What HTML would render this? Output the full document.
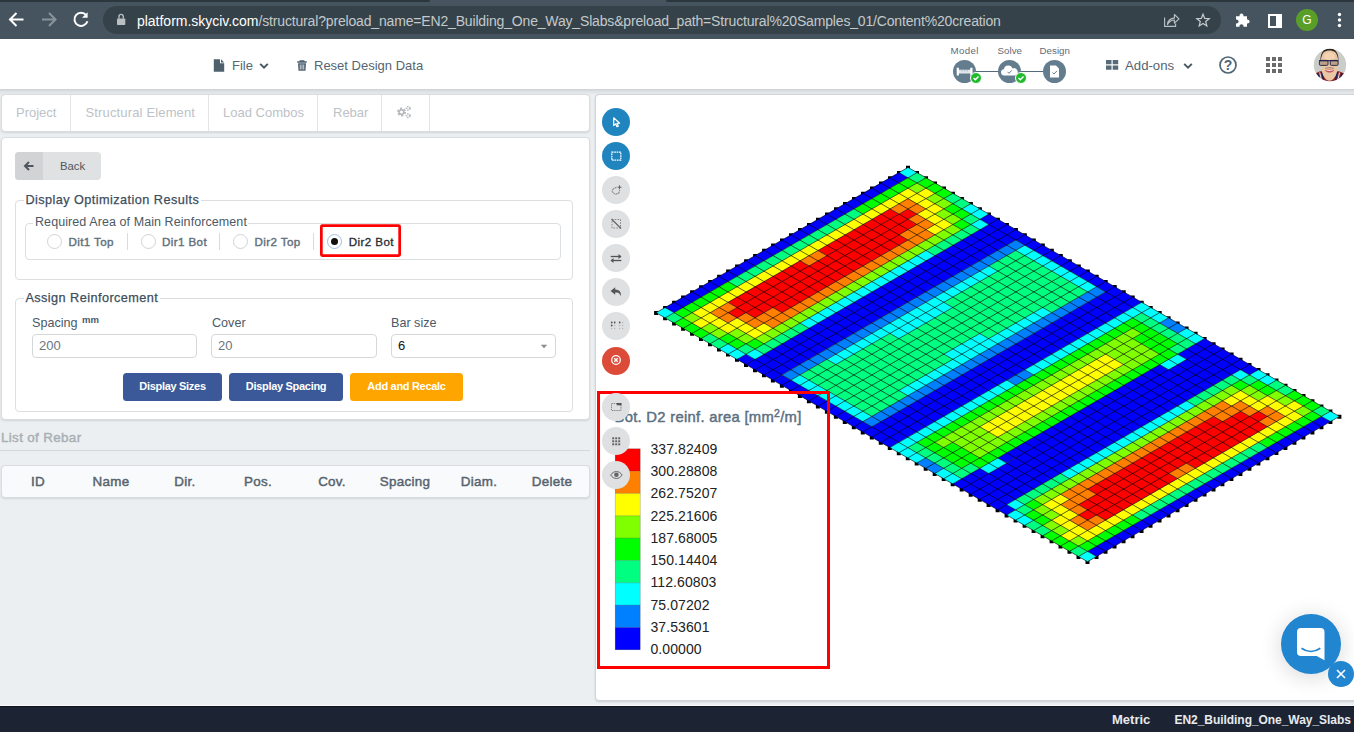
<!DOCTYPE html>
<html lang="en">
<head>
<meta charset="utf-8">
<title>SkyCiv Structural 3D</title>
<style>
*{box-sizing:border-box;margin:0;padding:0}
html,body{width:1354px;height:732px;overflow:hidden;background:#eceff1;font-family:"Liberation Sans",sans-serif;color:#3f4d5a}
.abs{position:absolute}
#chrome{left:0;top:0;width:1354px;height:38.500px;background:#45545e}
#chrome .topstrip{top:0;height:1.600px;background:#2b363d}
#urlpill{left:103px;top:6px;width:1118px;height:28px;border-radius:14px;background:#364249}
#url{left:137px;top:11.700px;font-size:14px;line-height:18px;color:#c3c9cc;white-space:nowrap;letter-spacing:-0.165px}
#url b{font-weight:normal;color:#fff;letter-spacing:-0.020px}
#appbar{left:0;top:38.500px;width:1354px;height:50.500px;background:#fff}
#hshadow{left:0;top:89px;width:1354px;height:6px;background:linear-gradient(#ccd0d4,#dde0e3 35%,#eceff1)}
.menu{font-size:13px;color:#556571;white-space:nowrap;line-height:18px}
#left{left:0;top:92px;width:592px;height:614px;background:#eceff1}
.card{background:#fff;border:1px solid #d9dde0;border-radius:4px;box-shadow:0 1px 2px rgba(34,36,38,.12)}
.tab{font-size:13px;color:#bdc2c6;line-height:16px;white-space:nowrap}
.vsep{width:1px;background:#e2e5e7}
.fs{border:1px solid #dcdfe2;border-radius:4px}
.lg{background:#fff;white-space:nowrap;line-height:16px}
.radio{width:15px;height:15px;border-radius:50%;border:1px solid #cfd3d6;background:#fff}
.rl{font-size:11.600px;color:#62707c;-webkit-text-stroke:0.400px currentColor;white-space:nowrap;line-height:14px;letter-spacing:.400px}
.lab{font-size:12.600px;color:#4b5966;white-space:nowrap;line-height:16px}
.inp{height:24px;border:1px solid #d4d8db;border-radius:4px;background:#fff;font-size:13px;color:#69757f;line-height:22px;padding-left:6px}
.btn{height:28px;border-radius:3.500px;color:#fff;font-size:11px;font-weight:bold;text-align:center;line-height:27px;white-space:nowrap;letter-spacing:-0.300px}
.th{font-size:13.400px;color:#56636e;-webkit-text-stroke:0.450px #56636e;letter-spacing:0.300px;white-space:nowrap;line-height:18px;text-align:center;width:80px}
#canvas{left:594.750px;top:94px;width:765px;height:606.800px;background:#fff;border:1px solid #d0d4d8;border-radius:4px;box-shadow:0 1px 2px rgba(34,36,38,.15)}
.tb{width:28px;height:28px;border-radius:50%;background:#dfe0e2}
.tb.on{background:#2085bf}
.tb.red{background:#dc4a38}
#bottom{left:0;top:706px;width:1354px;height:26px;background:#1c2433;border-top:1px solid #10151f;box-shadow:0 -1px 0 #f8f9fa}
.bt{font-size:13px;font-weight:bold;color:#e8eaed;white-space:nowrap;line-height:16px}
.lv{font-size:14px;color:#222;white-space:nowrap;line-height:16px;left:650.500px;letter-spacing:0.080px}
</style>
</head>
<body>
<!-- ===== browser chrome ===== -->
<div id="chrome" class="abs">
  <div class="abs topstrip" style="left:0;width:430px;border-radius:0 0 5px 0"></div><div class="abs topstrip" style="left:666px;width:688px;border-radius:0 0 0 5px"></div>
  <svg class="abs" style="left:0;top:0" width="100" height="38" viewBox="0 0 100 38" fill="none" stroke-linecap="butt" stroke-linejoin="miter">
    <path d="M23.5 19.5H10.5M16.5 13L10 19.5L16.5 26" stroke="#fff" stroke-width="2"/>
    <path d="M42 19.5H55M49 13L55.5 19.5L49 26" stroke="#87949b" stroke-width="2"/>
    <path d="M86.2 15.2A6.6 6.6 0 1 0 87.4 21.2" stroke="#fff" stroke-width="2"/>
    <path d="M87.6 12.2V17.8H82Z" fill="#fff" stroke="none"/>
  </svg>
  <div id="urlpill" class="abs"></div>
  <svg class="abs" style="left:114px;top:11px" width="14" height="16" viewBox="0 0 14 16"><rect x="3" y="7.400" width="8.300" height="6.700" rx="0.800" fill="#b9bfc3"/><path d="M5 7.600V5.500a2.150 2.150 0 0 1 4.300 0V7.600" fill="none" stroke="#b9bfc3" stroke-width="1.400"/></svg>
  <div id="url" class="abs"><b>platform.skyciv.com</b>/structural?preload_name=EN2_Building_One_Way_Slabs&amp;preload_path=Structural%20Samples_01/Content%20creation</div>
  <svg class="abs" style="left:1160px;top:8px" width="194" height="26" viewBox="0 0 194 26" fill="none">
    <!-- share -->
    <path d="M4.600 9.500V18.300H15.600V15.500" stroke="#b9c0c4" stroke-width="1.150"/>
    <path d="M7.500 16.600c0.300-4.300 2.900-6.300 6.900-6.500V6.500l4.600 4.300-4.600 4.300v-3.100c-3.300 0.100-5.300 1.400-6.900 4.600z" stroke="#b9c0c4" stroke-width="1.150" stroke-linejoin="round"/>
    <!-- star -->
    <path d="M43.00 6.20L44.68 10.39L49.18 10.69L45.71 13.58L46.82 17.96L43.00 15.55L39.18 17.96L40.29 13.58L36.82 10.69L41.32 10.39Z" stroke="#c5cbce" stroke-width="1.250" stroke-linejoin="miter"/>
    <!-- puzzle -->
    <path d="M76 8.200H79.600a2 2 0 1 1 3.800 0H87V11.600a2 2 0 1 1 0 3.800V18.800H83.400a2 2 0 1 0-3.800 0H76V15.400a2 2 0 1 0 0-3.800Z" fill="#fff"/>
    <!-- sidepanel -->
    <rect x="109" y="7" width="12" height="12" stroke="#fff" stroke-width="2"/><rect x="116" y="7" width="5" height="12" fill="#fff"/>
    <!-- avatar -->
    <circle cx="147" cy="12" r="11" fill="#5a9e2a"/>
    <!-- dots -->
    <circle cx="179.500" cy="6.500" r="1.700" fill="#fff"/><circle cx="179.500" cy="12" r="1.700" fill="#fff"/><circle cx="179.500" cy="17.500" r="1.700" fill="#fff"/>
  </svg>
  <div class="abs" style="left:1301px;top:12px;width:12px;text-align:center;font-size:12px;line-height:16px;color:#fff">G</div>
</div>

<!-- ===== app bar ===== -->
<div id="appbar" class="abs"></div>
<svg class="abs" style="left:212px;top:58px" width="14" height="16" viewBox="0 0 14 16"><path d="M1.800 1.300h6.200v4h4.200V13.700H1.800z M9 1.300l3.200 3.200H9z" fill="#50616e"/></svg>
<div class="abs menu" style="left:232px;top:57px">File</div>
<svg class="abs" style="left:258px;top:62px" width="12" height="9" viewBox="0 0 12 9"><path d="M2.200 1.800l3.800 3.800 3.800-3.800" fill="none" stroke="#465560" stroke-width="1.900"/></svg>
<svg class="abs" style="left:295.500px;top:59px" width="12" height="14" viewBox="0 0 12 14"><path d="M1.200 3h9.600M4.200 3V1.800h3.600V3" stroke="#50616e" stroke-width="1.300" fill="none"/><path d="M2 4.300h8l-0.500 7.500H2.500z" fill="#50616e"/><path d="M4.300 5.500v5M6 5.500v5M7.700 5.500v5" stroke="#fff" stroke-width="0.700"/></svg>
<div class="abs menu" style="left:314px;top:57px">Reset Design Data</div>

<!-- workflow steps -->
<div class="abs" style="left:950.5px;top:45px;font-size:9.700px;color:#5f6c77;line-height:12px;letter-spacing:0.350px">Model</div>
<div class="abs" style="left:997.5px;top:45px;font-size:9.700px;color:#5f6c77;line-height:12px;letter-spacing:0.050px">Solve</div>
<div class="abs" style="left:1039.5px;top:45px;font-size:9.700px;color:#5f6c77;line-height:12px;letter-spacing:0.050px">Design</div>
<svg class="abs" style="left:945px;top:56px" width="130" height="30" viewBox="0 0 130 30">
  <path d="M20 15.500H109" stroke="#55697a" stroke-width="1.200"/>
  <circle cx="19.500" cy="15.500" r="11.500" fill="#637c8e"/>
  <circle cx="64.500" cy="15.500" r="11.500" fill="#637c8e"/>
  <circle cx="109.500" cy="15.500" r="11.500" fill="#637c8e"/>
  <path d="M12.800 11.700v7.800M26.400 11.700v7.800" stroke="#fff" stroke-width="2.200"/><path d="M12.800 15.600h13.600" stroke="#fff" stroke-opacity=".82" stroke-width="3.800"/>
  <path d="M16.300 14.800h6.600" stroke="#637c8e" stroke-opacity=".55" stroke-width="0.800" stroke-dasharray="1.400 1.200"/>
  <path d="M58.500 19.500a3.200 3.200 0 0 1 0.300-6.300 4.600 4.600 0 0 1 8.800-0.700 3.600 3.600 0 0 1 2.700 7z" fill="#fff"/>
  <path d="M62.500 15.800l1.500 1.500 2.800-3" stroke="#637c8e" stroke-width="1" fill="none"/>
  <path d="M105 9.500h6l3 3v9h-9z" fill="#fff"/>
  <path d="M107.500 16.500l1.500 1.500 2.800-3" stroke="#637c8e" stroke-width="1" fill="none"/>
  <circle cx="31" cy="22" r="5.500" fill="#21ba2d" stroke="#fff" stroke-width="1"/>
  <path d="M28.500 22l1.800 1.800 3.200-3.400" stroke="#fff" stroke-width="1.400" fill="none"/>
  <circle cx="76" cy="22" r="5.500" fill="#21ba2d" stroke="#fff" stroke-width="1"/>
  <path d="M73.500 22l1.800 1.800 3.200-3.400" stroke="#fff" stroke-width="1.400" fill="none"/>
</svg>
<svg class="abs" style="left:1106px;top:60px" width="13" height="11" viewBox="0 0 13 11"><path d="M0 0h5.500v4.300h-5.500zM6.700 0h5.500v4.300h-5.500zM0 5.500h5.500v4.300h-5.500zM6.700 5.500h5.500v4.300h-5.500z" fill="#566a78"/></svg>
<div class="abs menu" style="left:1125px;top:57px;font-size:13.200px">Add-ons</div>
<svg class="abs" style="left:1181.500px;top:62px" width="12" height="9" viewBox="0 0 12 9"><path d="M2.200 1.800l3.800 3.800 3.800-3.800" fill="none" stroke="#465560" stroke-width="1.900"/></svg>
<svg class="abs" style="left:1218px;top:55px" width="20" height="20" viewBox="0 0 20 20"><circle cx="10" cy="10" r="8" fill="none" stroke="#4f6675" stroke-width="1.700"/></svg>
<div class="abs" style="left:1218px;top:56px;width:20px;text-align:center;font-size:14px;font-weight:bold;color:#4f6675;line-height:18px">?</div>
<svg class="abs" style="left:1265px;top:56px" width="18" height="18" viewBox="0 0 18 18" fill="#6b6b6b"><rect x="1" y="1" width="4" height="4"/><rect x="7" y="1" width="4" height="4"/><rect x="13" y="1" width="4" height="4"/><rect x="1" y="7" width="4" height="4"/><rect x="7" y="7" width="4" height="4"/><rect x="13" y="7" width="4" height="4"/><rect x="1" y="13" width="4" height="4"/><rect x="7" y="13" width="4" height="4"/><rect x="13" y="13" width="4" height="4"/></svg>
<svg class="abs" style="left:1313px;top:48px" width="34" height="34" viewBox="0 0 34 34">
  <defs><clipPath id="av"><circle cx="17" cy="17" r="16.200"/></clipPath><filter id="bl" x="-10%" y="-10%" width="120%" height="120%"><feGaussianBlur stdDeviation="0.700"/></filter></defs>
  <g clip-path="url(#av)"><g filter="url(#bl)">
    <rect x="-2" y="-2" width="38" height="38" fill="#cbcdc9"/>
    <path d="M-1 36V27l8-3.800h19l9 3.800v9z" fill="#8a2a32"/>
    <path d="M4.500 25l2.500 9M8.800 24l2 10M24.200 24l-2 10M29 25l-2.500 9" stroke="#1c2250" stroke-width="1.400" fill="none"/>
    <path d="M6.700 24.500l2.200 9M26.600 24.500l-2.200 9" stroke="#ece8e8" stroke-width="1" fill="none"/>
    <path d="M7.600 13c-0.300-7.500 3.200-12.300 8.900-12.300s9.200 4.800 8.900 12.300c-0.100 3.500-0.500 7-1.300 10.500-1.100 4.700-3.900 9.200-7.600 9.200s-6.500-4.500-7.600-9.200c-0.800-3.500-1.200-7-1.300-10.500z" fill="#ebc6a4"/>
    <ellipse cx="16.500" cy="9" rx="5.500" ry="4.500" fill="#f3d3b2"/>
    <path d="M7.700 14.500c-1.200-9.300 3.100-14.300 8.800-14.300s10 5 8.800 14.300c-0.200-4.800-1.200-8.400-3-10.200-1.500-1.400-3.800-1.900-5.800-1.900s-4.300 0.500-5.800 1.900c-1.800 1.800-2.800 5.400-3 10.200z" fill="#2c2520"/>
    <path d="M12 20.600c2.500-1.100 6.500-1.100 9 0" stroke="#94705c" stroke-width="1.100" fill="none" opacity=".65"/>
    <path d="M11.800 22.200c2.200 3.200 7.200 3.200 9.400 0-3-0.800-6.400-0.800-9.400 0z" fill="#c4545e"/>
    <path d="M12.600 22.300c2.500-0.500 5.300-0.500 7.800 0-2.300 1-5.500 1-7.800 0z" fill="#f0dfda"/>
    <rect x="6.400" y="12.400" width="8.600" height="5" rx="1.200" fill="#8a7058" fill-opacity=".45" stroke="#1b1f4a" stroke-width="0.900"/>
    <rect x="17.300" y="12.400" width="7.800" height="5" rx="1.200" fill="#8a7058" fill-opacity=".45" stroke="#1b1f4a" stroke-width="0.900"/>
    <path d="M6 12.700h19.300" stroke="#1b1f4a" stroke-width="1.200"/>
  </g></g>
</svg>

<!-- ===== left panel ===== -->
<div id="left" class="abs"></div>
<div id="hshadow" class="abs"></div>
<div class="abs card" style="left:1px;top:94px;width:589px;height:38px"></div>
<div class="abs tab" style="left:16px;top:105px">Project</div>
<div class="abs vsep" style="left:70px;top:95px;height:36px"></div>
<div class="abs tab" style="left:85.500px;top:105px;letter-spacing:0.150px">Structural Element</div>
<div class="abs vsep" style="left:208px;top:95px;height:36px"></div>
<div class="abs tab" style="left:223px;top:105px">Load Combos</div>
<div class="abs vsep" style="left:317px;top:95px;height:36px"></div>
<div class="abs tab" style="left:333px;top:105px">Rebar</div>
<div class="abs vsep" style="left:381px;top:95px;height:36px"></div>
<svg class="abs" style="left:396px;top:105px" width="16" height="14" viewBox="0 0 16 14"><circle cx="5.500" cy="7" r="3.200" fill="none" stroke="#b4b9bd" stroke-width="2.600" stroke-dasharray="1.900 1.450"/><circle cx="5.500" cy="7" r="2.300" fill="none" stroke="#b4b9bd" stroke-width="1.600"/><circle cx="12.200" cy="3.300" r="1.700" fill="none" stroke="#b4b9bd" stroke-width="1.800" stroke-dasharray="1.200 0.900"/><circle cx="12.200" cy="10.700" r="1.700" fill="none" stroke="#b4b9bd" stroke-width="1.800" stroke-dasharray="1.200 0.900"/></svg>
<div class="abs vsep" style="left:429px;top:95px;height:36px"></div>

<div class="abs card" style="left:1px;top:137px;width:589px;height:283px"></div>
<!-- back button -->
<div class="abs" style="left:15px;top:152px;width:86px;height:28px;border-radius:4px;background:#e0e1e2"></div>
<div class="abs" style="left:15px;top:152px;width:28px;height:28px;border-radius:4px 0 0 4px;background:#d2d3d4"></div>
<svg class="abs" style="left:23px;top:160px" width="12" height="12" viewBox="0 0 12 12"><path d="M10.500 6H2.500M6 2L2 6l4 4" fill="none" stroke="#4e5660" stroke-width="2"/></svg>
<div class="abs" style="left:60px;top:158px;font-size:11.300px;color:#4e5660;line-height:16px">Back</div>

<!-- fieldset 1 -->
<div class="abs fs" style="left:15px;top:199.500px;width:558px;height:80.500px"></div>
<div class="abs lg" style="left:24px;top:192px;padding:0 2px 0 1.400px;font-size:12.700px;letter-spacing:0.440px;color:#3d4d5c;-webkit-text-stroke:0.250px #3d4d5c">Display Optimization Results</div>
<div class="abs fs" style="left:25px;top:222.500px;width:536px;height:37.500px"></div>
<div class="abs lg" style="left:33px;top:214px;padding:0 1px 0 2px;font-size:12.500px;letter-spacing:0.080px;color:#4b5966">Required Area of Main Reinforcement</div>
<div class="abs radio" style="left:47px;top:234px"></div>
<div class="abs rl" style="left:68.400px;top:235px">Dit1 Top</div>
<div class="abs vsep" style="left:127px;top:233px;height:17px;background:#d9dcdf"></div>
<div class="abs radio" style="left:141px;top:234px"></div>
<div class="abs rl" style="left:162px;top:235px">Dir1 Bot</div>
<div class="abs vsep" style="left:219px;top:233px;height:17px;background:#d9dcdf"></div>
<div class="abs radio" style="left:233px;top:234px"></div>
<div class="abs rl" style="left:254.500px;top:235px">Dir2 Top</div>
<div class="abs vsep" style="left:313px;top:233px;height:17px;background:#d9dcdf"></div>
<div class="abs radio" style="left:327px;top:234px;border-color:#9fc3dc"></div>
<div class="abs" style="left:330.700px;top:237.700px;width:7.600px;height:7.600px;border-radius:50%;background:#111"></div>
<div class="abs rl" style="left:348.800px;top:235px;color:#262b30;-webkit-text-stroke-width:0.300px">Dir2 Bot</div>
<svg class="abs" style="left:318px;top:222px" width="86" height="38" viewBox="0 0 86 38"><rect x="3.350" y="3.650" width="78.300" height="29.900" rx="1" fill="none" stroke="#ff0000" stroke-width="2.700"/></svg>

<!-- fieldset 2 -->
<div class="abs fs" style="left:15px;top:297.500px;width:558px;height:114px"></div>
<div class="abs lg" style="left:24px;top:290px;padding:0 2px 0 1.400px;font-size:12.700px;letter-spacing:0.440px;color:#3d4d5c;-webkit-text-stroke:0.250px #3d4d5c">Assign Reinforcement</div>
<div class="abs lab" style="left:32px;top:315px">Spacing <span style="font-size:9.500px;font-weight:bold;position:relative;top:-4px;left:1px">mm</span></div>
<div class="abs lab" style="left:212px;top:315px">Cover</div>
<div class="abs lab" style="left:391px;top:315px">Bar size</div>
<div class="abs inp" style="left:32px;top:334px;width:165px">200</div>
<div class="abs inp" style="left:211px;top:334px;width:166px">20</div>
<div class="abs inp" style="left:391px;top:334px;width:165px;color:#111">6</div>
<svg class="abs" style="left:540px;top:344px" width="8" height="5" viewBox="0 0 8 5"><path d="M0.800 0.800h6.400L4 4.200z" fill="#8a8a8a"/></svg>
<div class="abs btn" style="left:123px;top:373px;width:99px;background:#3b5998">Display Sizes</div>
<div class="abs btn" style="left:229px;top:373px;width:114px;background:#3b5998">Display Spacing</div>
<div class="abs btn" style="left:350px;top:373px;width:113px;background:#ffa500">Add and Recalc</div>

<div class="abs" style="left:1px;top:428.500px;font-size:13.400px;color:#a9afb4;-webkit-text-stroke:0.450px #a9afb4;letter-spacing:0.350px;line-height:18px;white-space:nowrap">List of Rebar</div>
<div class="abs" style="left:0;top:450px;width:590px;height:1px;background:#d4d8db"></div>
<div class="abs card" style="left:1px;top:465px;width:589px;height:33px;background:#f9fafb"></div>
<div class="abs th" style="left:-2px;top:473px">ID</div>
<div class="abs th" style="left:71px;top:473px">Name</div>
<div class="abs th" style="left:145px;top:473px">Dir.</div>
<div class="abs th" style="left:218px;top:473px">Pos.</div>
<div class="abs th" style="left:292px;top:473px">Cov.</div>
<div class="abs th" style="left:365px;top:473px">Spacing</div>
<div class="abs th" style="left:439px;top:473px">Diam.</div>
<div class="abs th" style="left:512px;top:473px">Delete</div>

<!-- ===== canvas ===== -->
<div id="canvas" class="abs"></div>
<svg class="abs" style="left:640px;top:150px" width="714" height="430" viewBox="0 0 714 430">
<path fill="#000" d="M266 15.8h4v4h-4zM14.1 161.1h4v4h-4zM275 21h4v4h-4zM23.1 166.3h4v4h-4zM284 26.2h4v4h-4zM32.1 171.5h4v4h-4zM293 31.4h4v4h-4zM41.1 176.7h4v4h-4zM302 36.6h4v4h-4zM50.1 181.8h4v4h-4zM310.9 41.7h4v4h-4zM59 187h4v4h-4zM319.9 46.9h4v4h-4zM68 192.2h4v4h-4zM328.9 52.1h4v4h-4zM77 197.4h4v4h-4zM337.9 57.3h4v4h-4zM86 202.6h4v4h-4zM346.9 62.5h4v4h-4zM95 207.8h4v4h-4zM355.9 67.7h4v4h-4zM104 213h4v4h-4zM364.9 72.9h4v4h-4zM113 218.2h4v4h-4zM373.9 78h4v4h-4zM122 223.3h4v4h-4zM382.8 83.2h4v4h-4zM130.9 228.5h4v4h-4zM391.8 88.4h4v4h-4zM139.9 233.7h4v4h-4zM400.8 93.6h4v4h-4zM148.9 238.9h4v4h-4zM409.8 98.8h4v4h-4zM157.9 244.1h4v4h-4zM418.8 104h4v4h-4zM166.9 249.3h4v4h-4zM427.8 109.2h4v4h-4zM175.9 254.5h4v4h-4zM436.8 114.4h4v4h-4zM184.9 259.7h4v4h-4zM445.8 119.5h4v4h-4zM193.9 264.8h4v4h-4zM454.7 124.7h4v4h-4zM202.8 270h4v4h-4zM463.7 129.9h4v4h-4zM211.8 275.2h4v4h-4zM472.7 135.1h4v4h-4zM220.8 280.4h4v4h-4zM481.7 140.3h4v4h-4zM229.8 285.6h4v4h-4zM490.7 145.5h4v4h-4zM238.8 290.8h4v4h-4zM499.7 150.7h4v4h-4zM247.8 296h4v4h-4zM508.7 155.9h4v4h-4zM256.8 301.2h4v4h-4zM517.7 161h4v4h-4zM265.8 306.3h4v4h-4zM526.6 166.2h4v4h-4zM274.7 311.5h4v4h-4zM535.6 171.4h4v4h-4zM283.7 316.7h4v4h-4zM544.6 176.6h4v4h-4zM292.7 321.9h4v4h-4zM553.6 181.8h4v4h-4zM301.7 327.1h4v4h-4zM562.6 187h4v4h-4zM310.7 332.3h4v4h-4zM571.6 192.2h4v4h-4zM319.7 337.5h4v4h-4zM580.6 197.4h4v4h-4zM328.7 342.7h4v4h-4zM589.6 202.5h4v4h-4zM337.7 347.8h4v4h-4zM598.5 207.7h4v4h-4zM346.6 353h4v4h-4zM607.5 212.9h4v4h-4zM355.6 358.2h4v4h-4zM616.5 218.1h4v4h-4zM364.6 363.4h4v4h-4zM625.5 223.3h4v4h-4zM373.6 368.6h4v4h-4zM634.5 228.5h4v4h-4zM382.6 373.8h4v4h-4zM643.5 233.7h4v4h-4zM391.6 379h4v4h-4zM652.5 238.9h4v4h-4zM400.6 384.2h4v4h-4zM661.5 244h4v4h-4zM409.6 389.3h4v4h-4zM670.4 249.2h4v4h-4zM418.5 394.5h4v4h-4zM679.4 254.4h4v4h-4zM427.5 399.7h4v4h-4zM688.4 259.6h4v4h-4zM436.5 404.9h4v4h-4zM697.4 264.8h4v4h-4zM445.5 410.1h4v4h-4zM257 21h4v4h-4zM688.4 270h4v4h-4zM248 26.2h4v4h-4zM679.4 275.2h4v4h-4zM239 31.4h4v4h-4zM670.4 280.4h4v4h-4zM230 36.6h4v4h-4zM661.4 285.6h4v4h-4zM221 41.7h4v4h-4zM652.4 290.7h4v4h-4zM212 46.9h4v4h-4zM643.4 295.9h4v4h-4zM203 52.1h4v4h-4zM634.4 301.1h4v4h-4zM194 57.3h4v4h-4zM625.4 306.3h4v4h-4zM185 62.5h4v4h-4zM616.4 311.5h4v4h-4zM176 67.7h4v4h-4zM607.4 316.7h4v4h-4zM167 72.9h4v4h-4zM598.4 321.9h4v4h-4zM158 78.1h4v4h-4zM589.4 327.1h4v4h-4zM149 83.3h4v4h-4zM580.4 332.3h4v4h-4zM140 88.5h4v4h-4zM571.5 337.4h4v4h-4zM131.1 93.6h4v4h-4zM562.5 342.6h4v4h-4zM122.1 98.8h4v4h-4zM553.5 347.8h4v4h-4zM113.1 104h4v4h-4zM544.5 353h4v4h-4zM104.1 109.2h4v4h-4zM535.5 358.2h4v4h-4zM95.1 114.4h4v4h-4zM526.5 363.4h4v4h-4zM86.1 119.6h4v4h-4zM517.5 368.6h4v4h-4zM77.1 124.8h4v4h-4zM508.5 373.8h4v4h-4zM68.1 130h4v4h-4zM499.5 379h4v4h-4zM59.1 135.2h4v4h-4zM490.5 384.2h4v4h-4zM50.1 140.3h4v4h-4zM481.5 389.3h4v4h-4zM41.1 145.5h4v4h-4zM472.5 394.5h4v4h-4zM32.1 150.7h4v4h-4zM463.5 399.7h4v4h-4zM23.1 155.9h4v4h-4zM454.5 404.9h4v4h-4z"/>
<path fill="#0000ff" d="M259 22.6L268 27.8L34.1 162.7L25.1 157.5ZM348.9 64.1L357.9 69.3L348.9 74.5L339.9 69.3ZM106 204.2L115 209.4L106 214.6L97 209.4ZM357.9 69.3L366.9 74.5L115 219.8L106 214.6ZM366.9 74.5L375.9 79.6L124 224.9L115 219.8ZM375.9 79.6L384.8 84.8L132.9 230.1L124 224.9ZM384.8 84.8L393.8 90L384.8 95.2L375.8 90ZM141.9 224.9L150.9 230.1L141.9 235.3L132.9 230.1ZM393.8 90L402.8 95.2L393.8 100.4L384.8 95.2ZM150.9 230.1L159.9 235.3L150.9 240.5L141.9 235.3ZM402.8 95.2L411.8 100.4L402.8 105.6L393.8 100.4ZM159.9 235.3L168.9 240.5L159.9 245.7L150.9 240.5ZM411.8 100.4L420.8 105.6L411.8 110.8L402.8 105.6ZM168.9 240.5L177.9 245.7L168.9 250.9L159.9 245.7ZM420.8 105.6L429.8 110.8L420.8 116L411.8 110.8ZM177.9 245.7L186.9 250.9L177.9 256.1L168.9 250.9ZM429.8 110.8L438.8 116L429.8 121.2L420.8 116ZM186.9 250.9L195.9 256.1L186.9 261.3L177.9 256.1ZM438.8 116L447.8 121.1L438.8 126.3L429.8 121.2ZM195.9 256.1L204.8 261.3L195.9 266.4L186.9 261.3ZM447.8 121.1L456.7 126.3L447.7 131.5L438.8 126.3ZM204.8 261.3L213.8 266.4L204.8 271.6L195.9 266.4ZM456.7 126.3L465.7 131.5L456.7 136.7L447.7 131.5ZM213.8 266.4L222.8 271.6L213.8 276.8L204.8 271.6ZM465.7 131.5L474.7 136.7L465.7 141.9L456.7 136.7ZM222.8 271.6L231.8 276.8L222.8 282L213.8 276.8ZM474.7 136.7L483.7 141.9L231.8 287.2L222.8 282ZM483.7 141.9L492.7 147.1L240.8 292.4L231.8 287.2ZM492.7 147.1L501.7 152.3L249.8 297.6L240.8 292.4ZM564.6 188.6L573.6 193.8L546.6 209.3L537.6 204.2ZM519.6 214.5L528.6 219.7L366.7 313.1L357.7 307.9ZM339.7 318.3L348.7 323.5L321.7 339.1L312.7 333.9ZM573.6 193.8L582.6 199L330.7 344.3L321.7 339.1ZM582.6 199L591.6 204.1L339.7 349.4L330.7 344.3ZM591.6 204.1L600.5 209.3L348.6 354.6L339.7 349.4ZM600.5 209.3L609.5 214.5L357.6 359.8L348.6 354.6ZM609.5 214.5L618.5 219.7L609.5 224.9L600.5 219.7ZM366.6 354.6L375.6 359.8L366.6 365L357.6 359.8ZM681.4 266.4L690.4 271.6L456.5 406.5L447.5 401.3Z"/>
<path fill="#0080ff" d="M375.8 90L384.8 95.2L150.9 230.1L141.9 224.9ZM456.7 136.7L465.7 141.9L231.8 276.8L222.8 271.6ZM384.7 219.7L393.7 224.9L375.7 235.3L366.7 230.1ZM528.6 167.8L537.6 173L528.6 178.2L519.6 173ZM285.7 307.9L294.7 313.1L285.7 318.3L276.7 313.1ZM537.6 173L546.6 178.2L537.6 183.4L528.6 178.2ZM294.7 313.1L303.7 318.3L294.7 323.5L285.7 318.3Z"/>
<path fill="#00ffff" d="M268 17.4L277 22.6L268 27.8L259 22.6ZM25.1 157.5L34.1 162.7L25.1 167.9L16.1 162.7ZM330.9 53.7L339.9 58.9L330.9 64.1L321.9 58.9ZM88 193.8L97 199L88 204.2L79 199ZM339.9 58.9L348.9 64.1L339.9 69.3L330.9 64.1ZM97 199L106 204.2L97 209.4L88 204.2ZM339.9 69.3L348.9 74.5L339.9 79.7L330.9 74.5ZM285.9 100.4L294.9 105.6L169 178.2L160 173.1ZM115 199L124 204.2L115 209.4L106 204.2ZM384.8 95.2L393.8 100.4L384.8 105.6L375.8 100.4ZM348.8 116L357.8 121.2L195.9 214.6L186.9 209.4ZM159.9 224.9L168.9 230.1L159.9 235.3L150.9 230.1ZM393.8 100.4L402.8 105.6L393.8 110.8L384.8 105.6ZM303.9 152.3L312.8 157.5L258.9 188.6L249.9 183.4ZM168.9 230.1L177.9 235.3L168.9 240.5L159.9 235.3ZM402.8 105.6L411.8 110.8L402.8 116L393.8 110.8ZM177.9 235.3L186.9 240.5L177.9 245.7L168.9 240.5ZM411.8 110.8L420.8 116L411.8 121.2L402.8 116ZM186.9 240.5L195.9 245.7L186.9 250.9L177.9 245.7ZM420.8 116L429.8 121.2L420.8 126.3L411.8 121.2ZM195.9 245.7L204.9 250.9L195.9 256.1L186.9 250.9ZM429.8 121.2L438.8 126.3L429.8 131.5L420.8 126.3ZM204.9 250.9L213.8 256.1L204.8 261.3L195.9 256.1ZM438.8 126.3L447.7 131.5L438.7 136.7L429.8 131.5ZM339.8 183.4L348.8 188.6L312.8 209.4L303.8 204.2ZM213.8 256.1L222.8 261.3L213.8 266.4L204.8 261.3ZM447.7 131.5L456.7 136.7L447.7 141.9L438.7 136.7ZM402.8 157.5L411.7 162.7L267.8 245.7L258.8 240.5ZM222.8 261.3L231.8 266.4L222.8 271.6L213.8 266.4ZM501.7 152.3L510.7 157.5L393.7 224.9L384.7 219.7ZM366.7 230.1L375.7 235.3L258.8 302.8L249.8 297.6ZM510.7 157.5L519.7 162.6L510.7 167.8L501.7 162.7ZM267.8 297.6L276.7 302.8L267.8 307.9L258.8 302.8ZM519.7 162.6L528.6 167.8L519.6 173L510.7 167.8ZM276.7 302.8L285.7 307.9L276.7 313.1L267.8 307.9ZM546.6 178.2L555.6 183.4L546.6 188.6L537.6 183.4ZM303.7 318.3L312.7 323.5L303.7 328.7L294.7 323.5ZM555.6 183.4L564.6 188.6L555.6 193.8L546.6 188.6ZM312.7 323.5L321.7 328.7L312.7 333.9L303.7 328.7ZM537.6 204.2L546.6 209.3L528.6 219.7L519.6 214.5ZM357.7 307.9L366.7 313.1L348.7 323.5L339.7 318.3ZM600.5 219.7L609.5 224.9L600.5 230.1L591.5 224.9ZM546.6 250.8L555.5 256L429.6 328.7L420.6 323.5ZM375.6 349.4L384.6 354.6L375.6 359.8L366.6 354.6ZM618.5 219.7L627.5 224.9L618.5 230.1L609.5 224.9ZM375.6 359.8L384.6 365L375.6 370.2L366.6 365ZM627.5 224.9L636.5 230.1L627.5 235.3L618.5 230.1ZM384.6 365L393.6 370.2L384.6 375.4L375.6 370.2ZM690.4 261.2L699.4 266.4L690.4 271.6L681.4 266.4ZM447.5 401.3L456.5 406.5L447.5 411.7L438.5 406.5Z"/>
<path fill="#00ff80" d="M277 22.6L286 27.8L277 33L268 27.8ZM214 58.9L223 64.1L97.1 136.8L88.1 131.6ZM34.1 162.7L43.1 167.9L34.1 173.1L25.1 167.9ZM312.9 43.3L321.9 48.5L312.9 53.7L303.9 48.5ZM70 183.4L79 188.6L70 193.8L61 188.6ZM321.9 48.5L330.9 53.7L321.9 58.9L312.9 53.7ZM79 188.6L88 193.8L79 199L70 193.8ZM330.9 64.1L339.9 69.3L330.9 74.5L321.9 69.3ZM106 193.8L115 199L106 204.2L97 199ZM330.9 74.5L339.9 79.7L294.9 105.6L285.9 100.4ZM160 173.1L169 178.2L124 204.2L115 199ZM375.8 100.4L384.8 105.6L357.8 121.2L348.8 116ZM186.9 209.4L195.9 214.6L168.9 230.1L159.9 224.9ZM384.8 105.6L393.8 110.8L312.8 157.5L303.9 152.3ZM249.9 183.4L258.9 188.6L177.9 235.3L168.9 230.1ZM393.8 110.8L402.8 116L186.9 240.5L177.9 235.3ZM402.8 116L411.8 121.2L195.9 245.7L186.9 240.5ZM411.8 121.2L420.8 126.3L204.9 250.9L195.9 245.7ZM420.8 126.3L429.8 131.5L213.8 256.1L204.9 250.9ZM429.8 131.5L438.7 136.7L348.8 188.6L339.8 183.4ZM303.8 204.2L312.8 209.4L222.8 261.3L213.8 256.1ZM438.7 136.7L447.7 141.9L411.7 162.7L402.8 157.5ZM258.8 240.5L267.8 245.7L231.8 266.4L222.8 261.3ZM501.7 162.7L510.7 167.8L501.7 173L492.7 167.8ZM276.8 292.4L285.7 297.6L276.7 302.8L267.8 297.6ZM510.7 167.8L519.6 173L510.6 178.2L501.7 173ZM285.7 297.6L294.7 302.8L285.7 307.9L276.7 302.8ZM519.6 173L528.6 178.2L519.6 183.4L510.6 178.2ZM294.7 302.8L303.7 307.9L294.7 313.1L285.7 307.9ZM528.6 178.2L537.6 183.4L528.6 188.6L519.6 183.4ZM303.7 307.9L312.7 313.1L303.7 318.3L294.7 313.1ZM537.6 183.4L546.6 188.6L537.6 193.8L528.6 188.6ZM312.7 313.1L321.7 318.3L312.7 323.5L303.7 318.3ZM546.6 188.6L555.6 193.8L537.6 204.2L528.6 199ZM330.7 313.1L339.7 318.3L321.7 328.7L312.7 323.5ZM591.5 224.9L600.5 230.1L555.5 256L546.6 250.8ZM420.6 323.5L429.6 328.7L384.6 354.6L375.6 349.4ZM609.5 224.9L618.5 230.1L609.5 235.3L600.5 230.1ZM384.6 354.6L393.6 359.8L384.6 365L375.6 359.8ZM636.5 230.1L645.5 235.3L636.5 240.5L627.5 235.3ZM393.6 370.2L402.6 375.4L393.6 380.6L384.6 375.4ZM645.5 235.3L654.5 240.5L645.5 245.7L636.5 240.5ZM402.6 375.4L411.6 380.6L402.6 385.8L393.6 380.6ZM681.4 256L690.4 261.2L681.4 266.4L672.4 261.2ZM618.5 292.3L627.4 297.5L501.5 370.2L492.5 365ZM438.5 396.1L447.5 401.3L438.5 406.5L429.5 401.3Z"/>
<path fill="#00ff00" d="M268 27.8L277 33L223 64.1L214 58.9ZM88.1 131.6L97.1 136.8L43.1 167.9L34.1 162.7ZM286 27.8L295 33L286 38.2L277 33ZM43.1 167.9L52.1 173.1L43.1 178.3L34.1 173.1ZM295 33L304 38.2L295 43.3L286 38.2ZM52.1 173.1L61 178.3L52.1 183.4L43.1 178.3ZM304 38.2L312.9 43.3L303.9 48.5L295 43.3ZM61 178.3L70 183.4L61 188.6L52.1 183.4ZM312.9 53.7L321.9 58.9L312.9 64.1L303.9 58.9ZM88 183.4L97 188.6L88 193.8L79 188.6ZM321.9 58.9L330.9 64.1L321.9 69.3L312.9 64.1ZM97 188.6L106 193.8L97 199L88 193.8ZM321.9 69.3L330.9 74.5L321.9 79.7L312.9 74.5ZM115 188.6L124 193.8L115 199L106 193.8ZM492.7 167.8L501.7 173L285.7 297.6L276.8 292.4ZM501.7 173L510.6 178.2L501.6 183.4L492.7 178.2ZM294.7 292.4L303.7 297.6L294.7 302.8L285.7 297.6ZM510.6 178.2L519.6 183.4L501.6 193.8L492.7 188.6ZM312.7 292.4L321.7 297.6L303.7 307.9L294.7 302.8ZM519.6 183.4L528.6 188.6L510.6 199L501.6 193.8ZM321.7 297.6L330.7 302.8L312.7 313.1L303.7 307.9ZM528.6 188.6L537.6 193.8L519.6 204.2L510.6 199ZM330.7 302.8L339.7 307.9L321.7 318.3L312.7 313.1ZM528.6 199L537.6 204.2L339.7 318.3L330.7 313.1ZM600.5 230.1L609.5 235.3L600.5 240.5L591.5 235.3ZM393.6 349.4L402.6 354.6L393.6 359.8L384.6 354.6ZM618.5 230.1L627.5 235.3L618.5 240.5L609.5 235.3ZM393.6 359.8L402.6 365L393.6 370.2L384.6 365ZM627.5 235.3L636.5 240.5L627.5 245.7L618.5 240.5ZM402.6 365L411.6 370.2L402.6 375.4L393.6 370.2ZM654.5 240.5L663.5 245.6L654.5 250.8L645.5 245.7ZM411.6 380.6L420.5 385.8L411.6 390.9L402.6 385.8ZM663.5 245.6L672.4 250.8L663.4 256L654.5 250.8ZM420.5 385.8L429.5 390.9L420.5 396.1L411.6 390.9ZM672.4 250.8L681.4 256L672.4 261.2L663.4 256ZM429.5 390.9L438.5 396.1L429.5 401.3L420.5 396.1ZM672.4 261.2L681.4 266.4L627.4 297.5L618.5 292.3ZM492.5 365L501.5 370.2L447.5 401.3L438.5 396.1Z"/>
<path fill="#80ff00" d="M277 33L286 38.2L277 43.3L268 38.2ZM52.1 162.7L61.1 167.9L52.1 173.1L43.1 167.9ZM295 43.3L303.9 48.5L294.9 53.7L286 48.5ZM70 173.1L79 178.3L70 183.4L61 178.3ZM303.9 48.5L312.9 53.7L303.9 58.9L294.9 53.7ZM79 178.3L88 183.4L79 188.6L70 183.4ZM303.9 58.9L312.9 64.1L303.9 69.3L294.9 64.1ZM97 178.3L106 183.4L97 188.6L88 183.4ZM312.9 64.1L321.9 69.3L312.9 74.5L303.9 69.3ZM106 183.4L115 188.6L106 193.8L97 188.6ZM312.9 74.5L321.9 79.7L124 193.8L115 188.6ZM492.7 178.2L501.6 183.4L303.7 297.6L294.7 292.4ZM492.7 188.6L501.6 193.8L474.7 209.3L465.7 204.2ZM339.7 276.8L348.7 282L321.7 297.6L312.7 292.4ZM501.6 193.8L510.6 199L483.6 214.5L474.7 209.3ZM348.7 282L357.7 287.2L330.7 302.8L321.7 297.6ZM510.6 199L519.6 204.2L339.7 307.9L330.7 302.8ZM591.5 235.3L600.5 240.5L402.6 354.6L393.6 349.4ZM609.5 235.3L618.5 240.5L609.5 245.7L600.5 240.5ZM402.6 354.6L411.6 359.8L402.6 365L393.6 359.8ZM618.5 240.5L627.5 245.7L618.5 250.8L609.5 245.7ZM411.6 359.8L420.6 365L411.6 370.2L402.6 365ZM636.5 240.5L645.5 245.7L636.5 250.8L627.5 245.7ZM411.6 370.2L420.6 375.4L411.6 380.6L402.6 375.4ZM645.5 245.7L654.5 250.8L645.5 256L636.5 250.8ZM420.6 375.4L429.5 380.6L420.5 385.8L411.6 380.6ZM663.4 256L672.4 261.2L663.4 266.4L654.4 261.2ZM438.5 385.8L447.5 390.9L438.5 396.1L429.5 390.9Z"/>
<path fill="#ffff00" d="M268 38.2L277 43.3L61.1 167.9L52.1 162.7ZM286 38.2L295 43.3L277 53.7L268 48.5ZM70.1 162.7L79 167.9L61 178.3L52.1 173.1ZM286 48.5L294.9 53.7L285.9 58.9L277 53.7ZM79 167.9L88 173.1L79 178.3L70 173.1ZM294.9 53.7L303.9 58.9L285.9 69.3L277 64.1ZM97 167.9L106 173.1L88 183.4L79 178.3ZM294.9 64.1L303.9 69.3L294.9 74.5L285.9 69.3ZM106 173.1L115 178.3L106 183.4L97 178.3ZM303.9 69.3L312.9 74.5L294.9 84.8L285.9 79.7ZM124 173.1L133 178.3L115 188.6L106 183.4ZM465.7 204.2L474.7 209.3L348.7 282L339.7 276.8ZM474.7 209.3L483.6 214.5L357.7 287.2L348.7 282ZM600.5 240.5L609.5 245.7L591.5 256L582.5 250.8ZM420.6 344.3L429.6 349.4L411.6 359.8L402.6 354.6ZM609.5 245.7L618.5 250.8L609.5 256L600.5 250.8ZM420.6 354.6L429.6 359.8L420.6 365L411.6 359.8ZM627.5 245.7L636.5 250.8L618.5 261.2L609.5 256ZM429.6 359.8L438.5 365L420.6 375.4L411.6 370.2ZM636.5 250.8L645.5 256L636.5 261.2L627.5 256ZM429.6 370.2L438.5 375.4L429.5 380.6L420.6 375.4ZM654.5 250.8L663.4 256L645.4 266.4L636.5 261.2ZM438.5 375.4L447.5 380.6L429.5 390.9L420.5 385.8ZM654.4 261.2L663.4 266.4L447.5 390.9L438.5 385.8Z"/>
<path fill="#ff8000" d="M268 48.5L277 53.7L259 64.1L250 58.9ZM178 100.4L187 105.6L169 116L160 110.8ZM88 152.3L97 157.5L79 167.9L70.1 162.7ZM277 53.7L285.9 58.9L277 64.1L268 58.9ZM88 162.7L97 167.9L88 173.1L79 167.9ZM277 64.1L285.9 69.3L276.9 74.5L268 69.3ZM106 162.7L115 167.9L106 173.1L97 167.9ZM285.9 69.3L294.9 74.5L267.9 90L258.9 84.8ZM133 157.5L142 162.7L115 178.3L106 173.1ZM285.9 79.7L294.9 84.8L133 178.3L124 173.1ZM582.5 250.8L591.5 256L429.6 349.4L420.6 344.3ZM600.5 250.8L609.5 256L582.5 271.6L573.5 266.4ZM447.6 339.1L456.6 344.2L429.6 359.8L420.6 354.6ZM609.5 256L618.5 261.2L609.5 266.4L600.5 261.2ZM438.6 354.6L447.5 359.8L438.5 365L429.6 359.8ZM627.5 256L636.5 261.2L627.5 266.4L618.5 261.2ZM438.5 365L447.5 370.2L438.5 375.4L429.6 370.2ZM636.5 261.2L645.4 266.4L627.5 276.8L618.5 271.6ZM546.5 313.1L555.5 318.3L537.5 328.7L528.5 323.5ZM456.5 365L465.5 370.2L447.5 380.6L438.5 375.4Z"/>
<path fill="#ff0000" d="M250 58.9L259 64.1L187 105.6L178 100.4ZM160 110.8L169 116L97 157.5L88 152.3ZM268 58.9L277 64.1L97 167.9L88 162.7ZM268 69.3L276.9 74.5L115 167.9L106 162.7ZM258.9 84.8L267.9 90L142 162.7L133 157.5ZM573.5 266.4L582.5 271.6L456.6 344.2L447.6 339.1ZM600.5 261.2L609.5 266.4L447.5 359.8L438.6 354.6ZM618.5 261.2L627.5 266.4L447.5 370.2L438.5 365ZM618.5 271.6L627.5 276.8L555.5 318.3L546.5 313.1ZM528.5 323.5L537.5 328.7L465.5 370.2L456.5 365Z"/>
<path fill="none" stroke="#000" stroke-opacity=".62" stroke-width="1" d="M268 17.4L16.1 162.7M277 22.6L25.1 167.9M286 27.8L34.1 173.1M295 33L43.1 178.3M304 38.2L52.1 183.4M312.9 43.3L61 188.6M321.9 48.5L70 193.8M330.9 53.7L79 199M339.9 58.9L88 204.2M348.9 64.1L97 209.4M357.9 69.3L106 214.6M366.9 74.5L115 219.8M375.9 79.6L124 224.9M384.8 84.8L132.9 230.1M393.8 90L141.9 235.3M402.8 95.2L150.9 240.5M411.8 100.4L159.9 245.7M420.8 105.6L168.9 250.9M429.8 110.8L177.9 256.1M438.8 116L186.9 261.3M447.8 121.1L195.9 266.4M456.7 126.3L204.8 271.6M465.7 131.5L213.8 276.8M474.7 136.7L222.8 282M483.7 141.9L231.8 287.2M492.7 147.1L240.8 292.4M501.7 152.3L249.8 297.6M510.7 157.5L258.8 302.8M519.7 162.6L267.8 307.9M528.6 167.8L276.7 313.1M537.6 173L285.7 318.3M546.6 178.2L294.7 323.5M555.6 183.4L303.7 328.7M564.6 188.6L312.7 333.9M573.6 193.8L321.7 339.1M582.6 199L330.7 344.3M591.6 204.1L339.7 349.4M600.5 209.3L348.6 354.6M609.5 214.5L357.6 359.8M618.5 219.7L366.6 365M627.5 224.9L375.6 370.2M636.5 230.1L384.6 375.4M645.5 235.3L393.6 380.6M654.5 240.5L402.6 385.8M663.5 245.6L411.6 390.9M672.4 250.8L420.5 396.1M681.4 256L429.5 401.3M690.4 261.2L438.5 406.5M699.4 266.4L447.5 411.7"/>
<path fill="none" stroke="#000" stroke-opacity=".62" stroke-width="1" d="M268 17.4L699.4 266.4M259 22.6L690.4 271.6M250 27.8L681.4 276.8M241 33L672.4 282M232 38.2L663.4 287.2M223 43.3L654.4 292.3M214 48.5L645.4 297.5M205 53.7L636.4 302.7M196 58.9L627.4 307.9M187 64.1L618.4 313.1M178 69.3L609.4 318.3M169 74.5L600.4 323.5M160 79.7L591.4 328.7M151 84.9L582.4 333.9M142 90.1L573.5 339M133.1 95.2L564.5 344.2M124.1 100.4L555.5 349.4M115.1 105.6L546.5 354.6M106.1 110.8L537.5 359.8M97.1 116L528.5 365M88.1 121.2L519.5 370.2M79.1 126.4L510.5 375.4M70.1 131.6L501.5 380.6M61.1 136.8L492.5 385.8M52.1 141.9L483.5 390.9M43.1 147.1L474.5 396.1M34.1 152.3L465.5 401.3M25.1 157.5L456.5 406.5M16.1 162.7L447.5 411.7"/>
</svg>
<!-- legend -->
<div class="abs" style="left:614.500px;top:407px;font-size:14.800px;color:#5b6f7f;-webkit-text-stroke:0.450px #5b6f7f;line-height:20px;white-space:nowrap;letter-spacing:0.285px">Bot. D2 reinf. area [mm<span style="font-size:10.500px;position:relative;top:-5px">2</span>/m]</div>
<svg class="abs" style="left:614px;top:448px" width="28" height="204" viewBox="0 0 28 204"><rect x="1.200" y="0.80" width="25" height="22.33" fill="#ff0000"/><rect x="1.200" y="23.13" width="25" height="22.33" fill="#ff8000"/><rect x="1.200" y="45.46" width="25" height="22.33" fill="#ffff00"/><rect x="1.200" y="67.79" width="25" height="22.33" fill="#80ff00"/><rect x="1.200" y="90.12" width="25" height="22.33" fill="#00ff00"/><rect x="1.200" y="112.45" width="25" height="22.33" fill="#00ff80"/><rect x="1.200" y="134.78" width="25" height="22.33" fill="#00ffff"/><rect x="1.200" y="157.11" width="25" height="22.33" fill="#0080ff"/><rect x="1.200" y="179.44" width="25" height="22.33" fill="#0000ff"/><path d="M1.200 23.13h25M1.200 45.46h25M1.200 67.79h25M1.200 90.12h25M1.200 112.45h25M1.200 134.78h25M1.200 157.11h25M1.200 179.44h25" stroke="#000" stroke-opacity=".3" stroke-width="0.600" fill="none"/><rect x="1.200" y="0.800" width="25" height="200.97" fill="none" stroke="#000" stroke-opacity=".3" stroke-width="0.600"/></svg>
<div class="abs lv" style="top:441px">337.82409</div>
<div class="abs lv" style="top:463px">300.28808</div>
<div class="abs lv" style="top:485px">262.75207</div>
<div class="abs lv" style="top:508px">225.21606</div>
<div class="abs lv" style="top:530px">187.68005</div>
<div class="abs lv" style="top:552px">150.14404</div>
<div class="abs lv" style="top:574px">112.60803</div>
<div class="abs lv" style="top:597px">75.07202</div>
<div class="abs lv" style="top:619px">37.53601</div>
<div class="abs lv" style="top:641px">0.00000</div>
<!-- red annotation -->
<div class="abs" style="left:597px;top:390.500px;width:233px;height:278px;border:3px solid #ff0000"></div>

<!-- toolbar buttons -->
<div class="abs tb on" style="left:602px;top:108px"></div>
<div class="abs tb on" style="left:602px;top:142px"></div>
<div class="abs tb" style="left:602px;top:176px"></div>
<div class="abs tb" style="left:602px;top:210px"></div>
<div class="abs tb" style="left:602px;top:244px"></div>
<div class="abs tb" style="left:602px;top:278px"></div>
<div class="abs tb" style="left:602px;top:312px"></div>
<div class="abs tb red" style="left:602px;top:347px"></div>
<div class="abs tb" style="left:602px;top:393px"></div>
<div class="abs tb" style="left:602px;top:427px"></div>
<div class="abs tb" style="left:602px;top:461px"></div>
<svg class="abs" style="left:602px;top:108px" width="28" height="390" viewBox="0 0 28 390" fill="none">
  <!-- 1 pointer -->
  <path d="M11.700 9.800V17.600L13.700 15.900L15 18.700L16.300 18.100L15.100 15.400L17.600 15.200Z" stroke="#fff" stroke-width="1.200" stroke-linejoin="round"/>
  <!-- 2 dashed square -->
  <rect x="9.800" y="44.200" width="9" height="8" stroke="#fff" stroke-width="1.200" stroke-dasharray="1.700 0.700"/>
  <!-- 3 polygon plus -->
  <path d="M14.500 79.300L11.300 80.700L10 83.700L13.200 86.300L16.800 85.200L17.600 82.200" stroke="#777" stroke-width="1" stroke-dasharray="2.200 0.600"/>
  <path d="M17.500 77.200V81.200M15.500 79.200H19.500" stroke="#666" stroke-width="1.100"/>
  <!-- 4 dashed square with slash -->
  <rect x="10" y="111.500" width="8.500" height="8.500" stroke="#888" stroke-width="1" stroke-dasharray="1.600 1.200"/>
  <path d="M9.500 111L19 120.500" stroke="#666" stroke-width="1.200"/>
  <!-- 5 exchange -->
  <path d="M8.700 148.500H19" stroke="#555" stroke-width="1.300"/><path d="M16.500 146l3 2.500-3 2.500z" fill="#555"/>
  <path d="M19.300 152.500H9" stroke="#555" stroke-width="1.300"/><path d="M11.500 150l-3 2.500 3 2.500z" fill="#555"/>
  <!-- 6 reply -->
  <path d="M13.200 179.200L8.600 183l4.600 3.800v-2.300c3.200 0 4.800 0.600 5.500 3.900 0.900-3.700-0.600-6.600-5.500-6.900z" fill="#555"/>
  <!-- 7 braille -->
  <g fill="#555"><circle cx="9.700" cy="214.500" r="0.900"/><circle cx="12.700" cy="214.500" r="0.900"/><circle cx="9.700" cy="217.500" r="0.900"/><circle cx="17.700" cy="214.500" r="0.900"/></g>
  <g fill="#b5b5b5"><circle cx="12.700" cy="217.500" r="0.700"/><circle cx="9.700" cy="220.500" r="0.700"/><circle cx="12.700" cy="220.500" r="0.700"/><circle cx="20.700" cy="214.500" r="0.700"/><circle cx="17.700" cy="217.500" r="0.700"/><circle cx="20.700" cy="217.500" r="0.700"/><circle cx="17.700" cy="220.500" r="0.700"/><circle cx="20.700" cy="220.500" r="0.700"/></g>
  <!-- 8 times circle -->
  <circle cx="14" cy="252" r="4.300" stroke="#fff" stroke-width="1.300"/>
  <path d="M12.300 250.300l3.400 3.400M15.700 250.300l-3.400 3.400" stroke="#fff" stroke-width="1.500"/>
  <!-- 9 dashed rect w/ corner -->
  <rect x="9.500" y="295.500" width="9.500" height="7" stroke="#777" stroke-width="0.900" stroke-dasharray="1.300 0.900"/>
  <rect x="14.700" y="295" width="4.800" height="2.300" fill="#555"/>
  <!-- 10 grid -->
  <g fill="#666"><rect x="10.200" y="329.300" width="2" height="2"/><rect x="13.200" y="329.300" width="2" height="2"/><rect x="16.200" y="329.300" width="2" height="2"/><rect x="10.200" y="332.300" width="2" height="2"/><rect x="13.200" y="332.300" width="2" height="2"/><rect x="16.200" y="332.300" width="2" height="2"/><rect x="10.200" y="335.300" width="2" height="2"/><rect x="13.200" y="335.300" width="2" height="2"/><rect x="16.200" y="335.300" width="2" height="2"/></g>
  <!-- 11 eye -->
  <path d="M8.700 367c2.800-4.600 8.600-4.600 11.400 0-2.800 4.600-8.600 4.600-11.400 0z" stroke="#666" stroke-width="1"/>
  <circle cx="14.400" cy="366.700" r="2.300" fill="#666"/>
</svg>


<!-- chat widget -->
<div class="abs" style="left:1281px;top:614px;width:60px;height:60px;border-radius:50%;background:#2185d0;box-shadow:0 3px 22px rgba(0,0,0,.16)"></div>
<svg class="abs" style="left:1281px;top:614px" width="60" height="60" viewBox="0 0 60 60"><path d="M20 14h19.500a4 4 0 0 1 4 4v28.200l-7.800-4.200H20a4 4 0 0 1-4-4V18a4 4 0 0 1 4-4z" fill="#fff"/><path d="M20.500 34.200c5.800 4.200 13 4.200 18.800 0" fill="none" stroke="#2185d0" stroke-width="1.700"/></svg>
<div class="abs" style="left:1328px;top:661px;width:26px;height:26px;border-radius:50%;background:#2185d0"></div>
<svg class="abs" style="left:1328px;top:661px" width="26" height="26" viewBox="0 0 26 26"><path d="M9 9l8 8M17 9l-8 8" stroke="#fff" stroke-width="1.600"/></svg>

<!-- ===== bottom bar ===== -->
<div id="bottom" class="abs"></div>
<div class="abs bt" style="left:1112px;top:712px">Metric</div>
<div class="abs bt" style="left:1174.500px;top:712px;font-size:12px;letter-spacing:-0.050px">EN2_Building_One_Way_Slabs</div>
</body>
</html>
